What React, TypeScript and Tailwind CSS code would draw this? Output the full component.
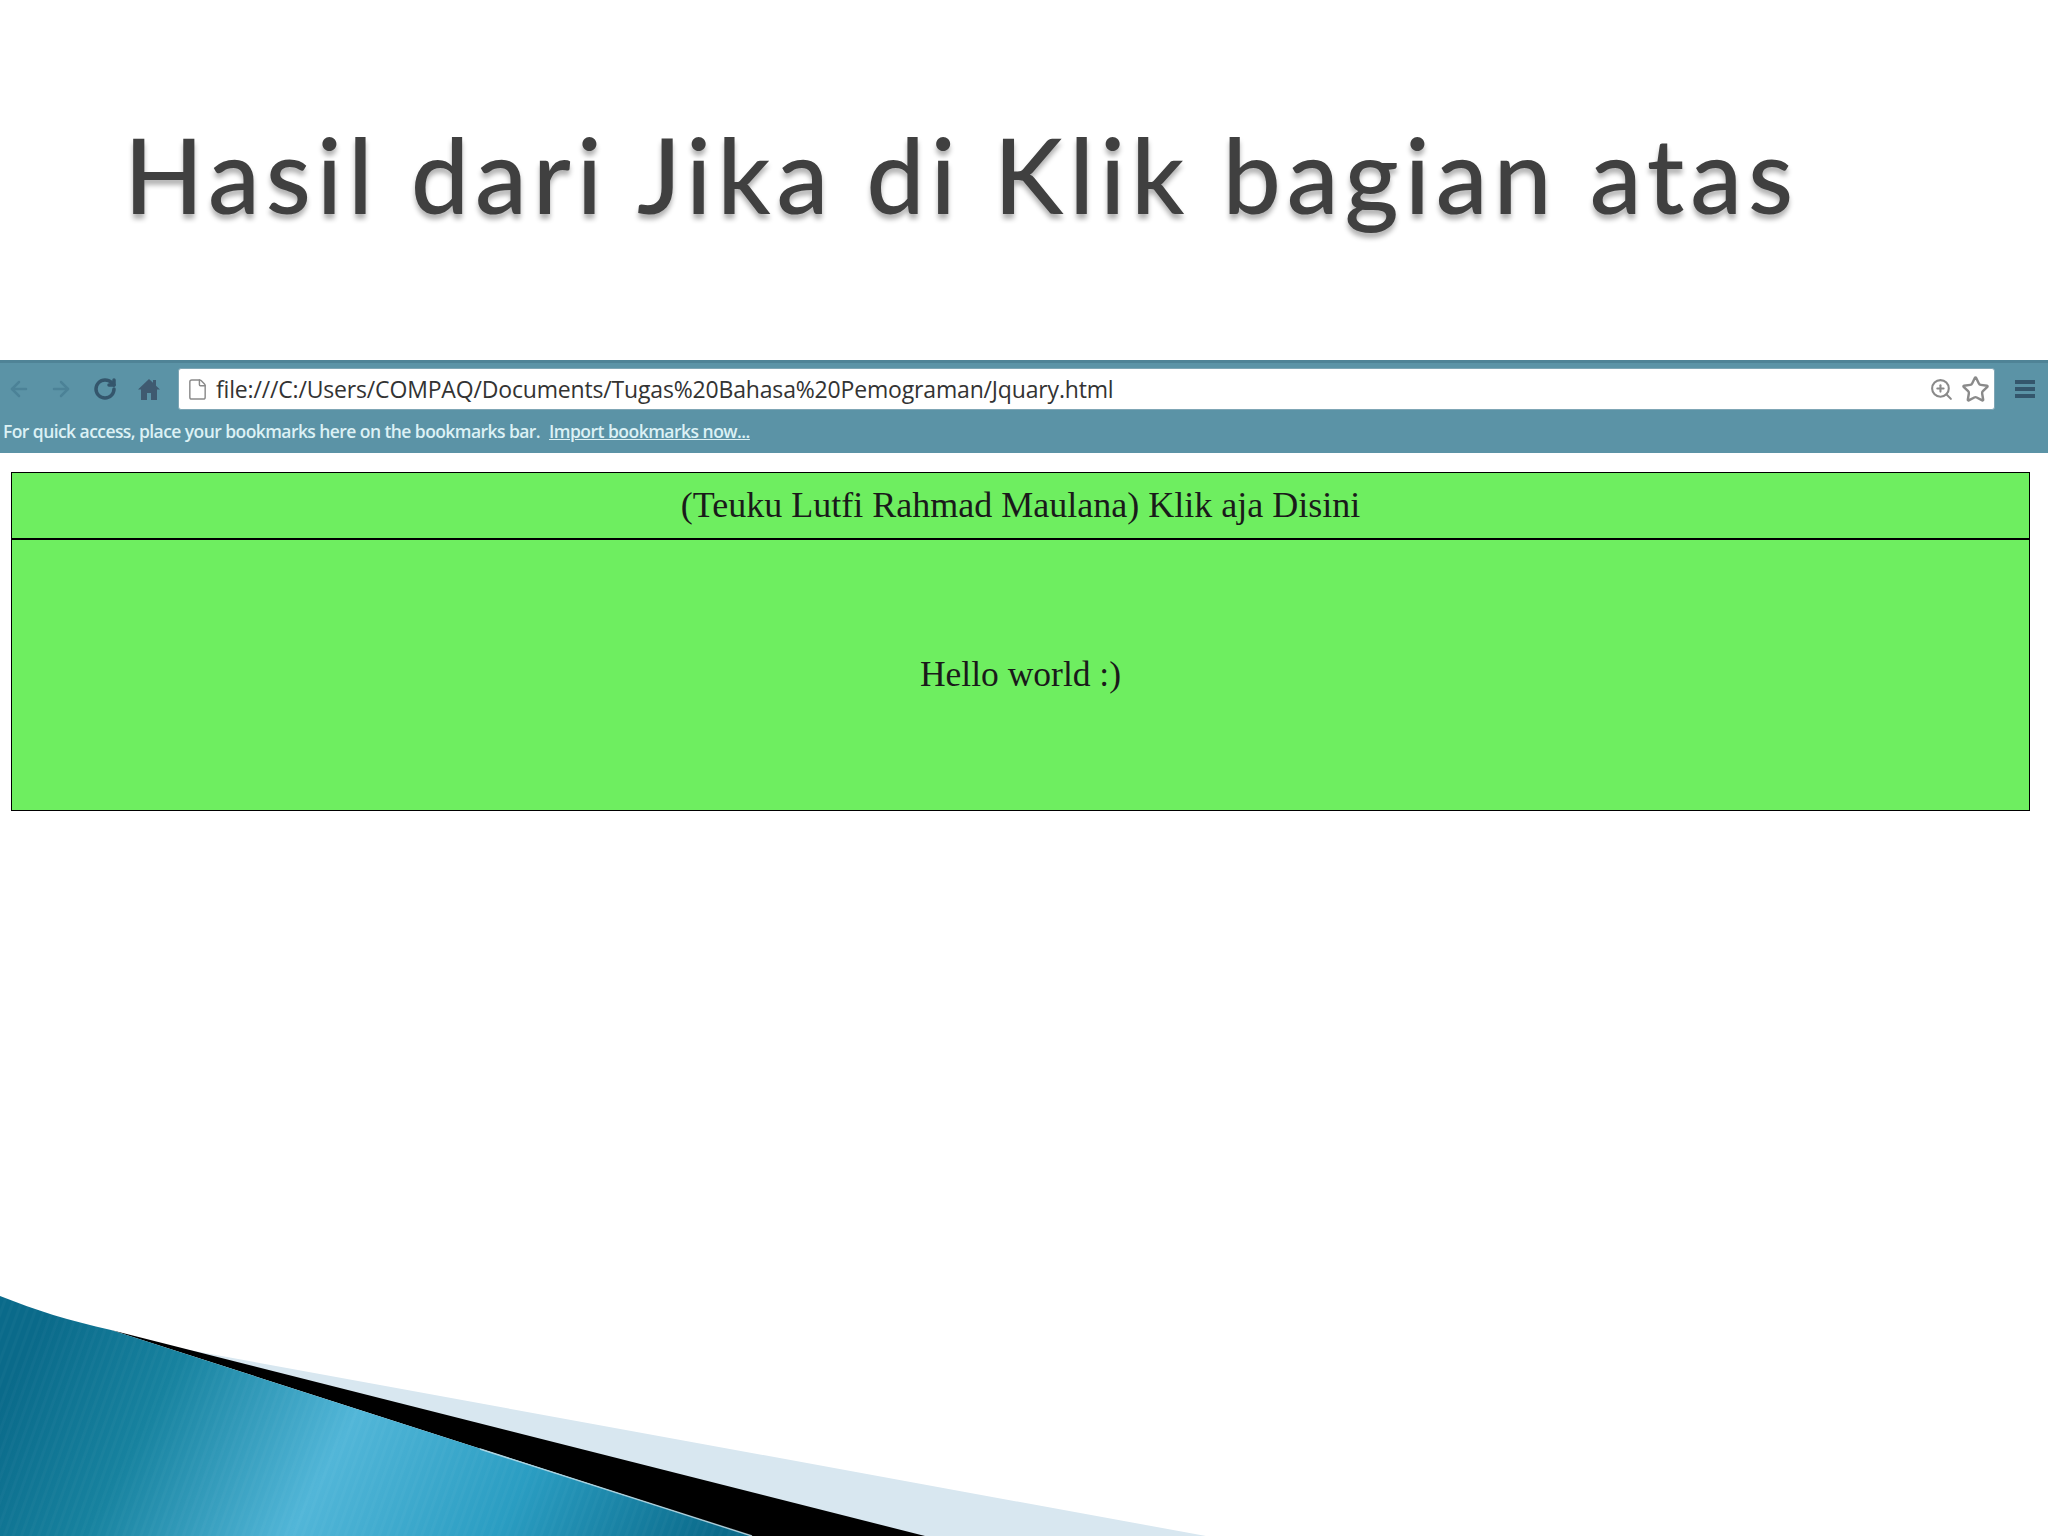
import { ArrowLeft, ArrowRight, RotateCw, File, ZoomIn, Star } from "lucide-react";

function Home() {
  return (
    <svg width="24" height="24" viewBox="0 0 24 24" className="ml-[20px] text-[#3f5a70]">
      <path fill="currentColor" d="M12 2 1 12.5h3V23h6v-7h4v7h6V12.5h3L19 8.700V3h-3v2.800z" />
    </svg>
  );
}

function Decoration() {
  const teal = "M0 1296 C 35 1310 70 1321 111 1330 L752 1536 L0 1536 Z";
  return (
    <svg className="absolute left-0 top-0" width="2048" height="1536" viewBox="0 0 2048 1536">
      <defs>
        <linearGradient id="swoosh" gradientUnits="userSpaceOnUse" x1="0" y1="1400" x2="608" y2="1734">
          <stop offset="0" stopColor="#0a6a8a" />
          <stop offset="0.2" stopColor="#17829f" />
          <stop offset="0.46" stopColor="#52b6d8" />
          <stop offset="0.72" stopColor="#2a9dc2" />
          <stop offset="1" stopColor="#0a6a8a" />
        </linearGradient>
        <pattern id="stripes" width="8" height="8" patternUnits="userSpaceOnUse" patternTransform="rotate(20)">
          <rect width="3" height="8" fill="#ffffff" opacity="0.025" />
        </pattern>
      </defs>
      <path fill="#d8e7f0" d="M150 1343 L1206 1536 L800 1536 L111 1330 Z" />
      <path fill="#000" d="M111 1330 L925 1536 L752 1536 Z" />
      <path fill="url(#swoosh)" d={teal} />
      <path fill="url(#stripes)" d={teal} />
      <path fill="none" stroke="#c3e0ea" strokeWidth="1.500" strokeOpacity="0.8" d="M480 1449 L752 1536" />
    </svg>
  );
}

export default function App() {
  return (
    <div className="relative w-[2048px] h-[1536px] overflow-hidden bg-white font-['Liberation_Sans',sans-serif]">
      <Decoration />
      <div className="relative flex flex-col">
        <div className="h-[360px] pl-[124px] pt-[109px]">
          <h1 className="font-['Lato',sans-serif] font-medium text-[104px] leading-[130px] tracking-[5.830px] text-[#404040] [text-shadow:0_5px_5px_rgba(0,0,0,0.3)]">
            Hasil dari Jika di Klik bagian atas
          </h1>
        </div>
        <div className="h-[93px] bg-[#5b93a6] border-t-[3px] border-[#4f8396] flex flex-col">
          <div className="h-[50px] flex items-center pt-[2px]">
            <div className="flex items-center w-[178px] pl-[7px]">
              <ArrowLeft size={24} strokeWidth={2.5} className="text-[#4c8297]" />
              <ArrowRight size={24} strokeWidth={2.5} className="ml-[18px] text-[#4c8297]" />
              <RotateCw size={24} strokeWidth={3.5} className="ml-[20px] text-[#34566c]" />
              <Home />
            </div>
            <div className="w-[1817px] h-[42px] bg-white rounded-[3px] border border-[#7fa6b5] flex items-center pl-[7px] pr-[4px]">
              <File size={23} strokeWidth={1.5} className="text-[#8a8a8a]" />
              <span className="ml-[7px] font-['Open_Sans',sans-serif] text-[23px] tracking-[-0.170px] text-[#333333]">
                file:///C:/Users/COMPAQ/Documents/Tugas%20Bahasa%20Pemograman/Jquary.html
              </span>
              <ZoomIn size={25} strokeWidth={2} className="ml-auto text-[#8a8a8a]" />
              <Star size={29} strokeWidth={2} className="ml-[7px] text-[#8a8a8a]" />
            </div>
            <div className="ml-[20px] flex flex-col gap-[3px]">
              <div className="w-[20px] h-[4px] bg-[#34566c]" />
              <div className="w-[20px] h-[4px] bg-[#34566c]" />
              <div className="w-[20px] h-[4px] bg-[#34566c]" />
            </div>
          </div>
          <div className="pl-[3px] pt-[5px] flex items-center font-['Open_Sans',sans-serif] font-semibold text-[17.500px] text-[#dcf1f5]">
            <span className="tracking-[-0.570px]">For quick access, place your bookmarks here on the bookmarks bar.</span>
            <span className="ml-[9px] underline tracking-[-0.520px]">Import bookmarks now...</span>
          </div>
        </div>
        <div className="mt-[19px] mx-[11px] w-[2019px] h-[339px] bg-[#6eee60] border border-black flex flex-col font-['Liberation_Serif',serif] text-[#1a1a1a]">
          <div className="h-[67px] border-b-[2px] border-black flex items-center justify-center text-[36px] pb-[1px]">
            (Teuku Lutfi Rahmad Maulana) Klik aja Disini
          </div>
          <div className="flex-1 flex items-center justify-center text-[35.500px]">Hello world :)</div>
        </div>
      </div>
    </div>
  );
}
